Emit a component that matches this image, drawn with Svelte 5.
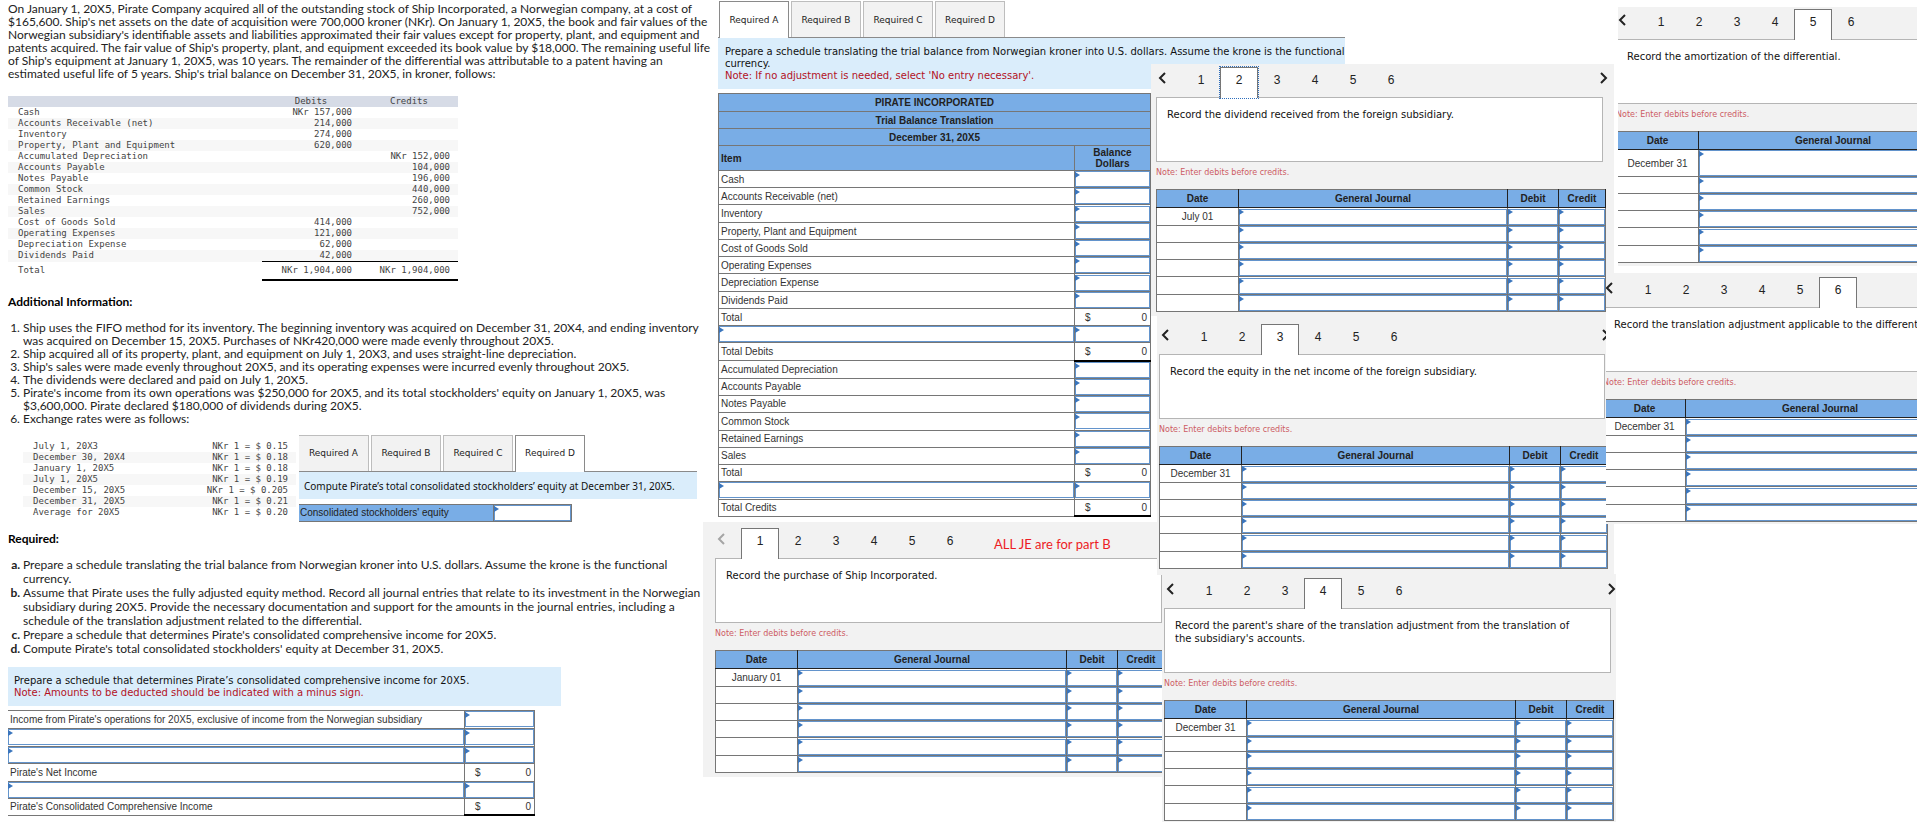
<script>
  const trialBalance = [
    { item: 'Cash', debit: 'NKr 157,000', credit: '' },
    { item: 'Accounts Receivable (net)', debit: '214,000', credit: '' },
    { item: 'Inventory', debit: '274,000', credit: '' },
    { item: 'Property, Plant and Equipment', debit: '620,000', credit: '' },
    { item: 'Accumulated Depreciation', debit: '', credit: 'NKr 152,000' },
    { item: 'Accounts Payable', debit: '', credit: '104,000' },
    { item: 'Notes Payable', debit: '', credit: '196,000' },
    { item: 'Common Stock', debit: '', credit: '440,000' },
    { item: 'Retained Earnings', debit: '', credit: '260,000' },
    { item: 'Sales', debit: '', credit: '752,000' },
    { item: 'Cost of Goods Sold', debit: '414,000', credit: '' },
    { item: 'Operating Expenses', debit: '121,000', credit: '' },
    { item: 'Depreciation Expense', debit: '62,000', credit: '' },
    { item: 'Dividends Paid', debit: '42,000', credit: '' }
  ];

  const rates = [
    ['July 1, 20X3', 'NKr 1 = $ 0.15'],
    ['December 30, 20X4', 'NKr 1 = $ 0.18'],
    ['January 1, 20X5', 'NKr 1 = $ 0.18'],
    ['July 1, 20X5', 'NKr 1 = $ 0.19'],
    ['December 15, 20X5', 'NKr 1 = $ 0.205'],
    ['December 31, 20X5', 'NKr 1 = $ 0.21'],
    ['Average for 20X5', 'NKr 1 = $ 0.20']
  ];

  const translation = [
    { label: 'Cash' },
    { label: 'Accounts Receivable (net)' },
    { label: 'Inventory' },
    { label: 'Property, Plant and Equipment' },
    { label: 'Cost of Goods Sold' },
    { label: 'Operating Expenses' },
    { label: 'Depreciation Expense' },
    { label: 'Dividends Paid' },
    { label: 'Total', total: true },
    { label: '' },
    { label: 'Total Debits', total: true, final: true },
    { label: 'Accumulated Depreciation' },
    { label: 'Accounts Payable' },
    { label: 'Notes Payable' },
    { label: 'Common Stock' },
    { label: 'Retained Earnings' },
    { label: 'Sales' },
    { label: 'Total', total: true },
    { label: '' },
    { label: 'Total Credits', total: true, final: true }
  ];

  const income = [
    { label: "Income from Pirate's operations for 20X5, exclusive of income from the Norwegian subsidiary" },
    { label: '' },
    { label: '' },
    { label: "Pirate's Net Income", total: true },
    { label: '' },
    { label: "Pirate's Consolidated Comprehensive Income", total: true, final: true }
  ];

  const entries = [
    { page: 1, date: 'January 01', text: 'Record the purchase of Ship Incorporated.', remark: 'ALL JE are for part B' },
    { page: 2, date: 'July 01', text: 'Record the dividend received from the foreign subsidiary.' },
    { page: 3, date: 'December 31', text: 'Record the equity in the net income of the foreign subsidiary.' },
    { page: 4, date: 'December 31', text: "Record the parent's share of the translation adjustment from the translation of the subsidiary's accounts." },
    { page: 5, date: 'December 31', text: 'Record the amortization of the differential.' },
    { page: 6, date: 'December 31', text: 'Record the translation adjustment applicable to the differential.' }
  ];

  const pages = [1, 2, 3, 4, 5, 6];
  const parts = ['A', 'B', 'C', 'D'];
</script>

{#snippet partTabs(active)}
  <div class="part-tabs">
    {#each parts as part}
      <button type="button" class:active={part === active}>Required {part}</button>
    {/each}
  </div>
{/snippet}

{#snippet field(label)}
  <td class="field"><input type="text" aria-label={label} /></td>
{/snippet}

{#snippet amountRows(rows)}
  {#each rows as row}
    <tr>
      {#if row.label}
        <td class="label">{row.label}</td>
      {:else}
        {@render field('Item')}
      {/if}
      {#if row.total}
        <td class="total" class:final={row.final}>
          <div class="money"><span>$</span><span>0</span></div>
        </td>
      {:else}
        {@render field(row.label || 'Amount')}
      {/if}
    </tr>
  {/each}
{/snippet}

{#snippet journal(entry)}
  <section class="journal journal-{entry.page}">
    <div class="sheet">
      <div class="pager">
        <button type="button" class="arrow" aria-label="Previous" disabled={entry.page === 1}>
          <svg viewBox="0 0 8 12"><path d="M7 1 L2 6 L7 11" /></svg>
        </button>
        {#each pages as page}
          <button type="button" class="page" class:active={page === entry.page}>{page}</button>
        {/each}
        {#if entry.remark}
          <span class="remark">{entry.remark}</span>
        {/if}
        <button type="button" class="arrow next" aria-label="Next">
          <svg viewBox="0 0 8 12"><path d="M1 1 L6 6 L1 11" /></svg>
        </button>
      </div>
      <div class="prompt">{entry.text}</div>
      <p class="hint">Note: Enter debits before credits.</p>
      <table class="grid">
        <colgroup><col class="c-date" /><col /><col class="c-debit" /><col class="c-credit" /></colgroup>
        <thead>
          <tr><th>Date</th><th>General Journal</th><th>Debit</th><th>Credit</th></tr>
        </thead>
        <tbody>
          {#each pages as line}
            <tr>
              <td class="date">{line === 1 ? entry.date : ''}</td>
              {@render field('General Journal')}
              {@render field('Debit')}
              {@render field('Credit')}
            </tr>
          {/each}
        </tbody>
      </table>
    </div>
  </section>
{/snippet}

<main>
  <div class="problem">
    <p>
      On January 1, 20X5, Pirate Company acquired all of the outstanding stock of Ship Incorporated, a Norwegian company, at a cost of<br />
      $165,600. Ship's net assets on the date of acquisition were 700,000 kroner (NKr). On January 1, 20X5, the book and fair values of the<br />
      Norwegian subsidiary's identifiable assets and liabilities approximated their fair values except for property, plant, and equipment and<br />
      patents acquired. The fair value of Ship's property, plant, and equipment exceeded its book value by $18,000. The remaining useful life<br />
      of Ship's equipment at January 1, 20X5, was 10 years. The remainder of the differential was attributable to a patent having an<br />
      estimated useful life of 5 years. Ship's trial balance on December 31, 20X5, in kroner, follows:
    </p>

    <table class="listing balance">
      <colgroup><col /><col class="c-amount" /><col class="c-amount" /></colgroup>
      <thead>
        <tr><th></th><th>Debits</th><th>Credits</th></tr>
      </thead>
      <tbody>
        {#each trialBalance as row}
          <tr><td>{row.item}</td><td>{row.debit}</td><td>{row.credit}</td></tr>
        {/each}
      </tbody>
      <tfoot>
        <tr><td>Total</td><td>NKr 1,904,000</td><td>NKr 1,904,000</td></tr>
      </tfoot>
    </table>

    <h2>Additional Information:</h2>
    <ol class="facts">
      <li>Ship uses the FIFO method for its inventory. The beginning inventory was acquired on December 31, 20X4, and ending inventory<br />was acquired on December 15, 20X5. Purchases of NKr420,000 were made evenly throughout 20X5.</li>
      <li>Ship acquired all of its property, plant, and equipment on July 1, 20X3, and uses straight-line depreciation.</li>
      <li>Ship's sales were made evenly throughout 20X5, and its operating expenses were incurred evenly throughout 20X5.</li>
      <li>The dividends were declared and paid on July 1, 20X5.</li>
      <li>Pirate's income from its own operations was $250,000 for 20X5, and its total stockholders' equity on January 1, 20X5, was<br />$3,600,000. Pirate declared $180,000 of dividends during 20X5.</li>
      <li>Exchange rates were as follows:</li>
    </ol>

    <div class="rates-row">
      <table class="listing rates">
        <tbody>
          {#each rates as [date, rate]}
            <tr><td>{date}</td><td>{rate}</td></tr>
          {/each}
        </tbody>
      </table>
      <section class="part-d">
        {@render partTabs('D')}
        <div class="instruction">Compute Pirate’s total consolidated stockholders’ equity at December 31, 20X5.</div>
        <table class="grid equity">
          <tbody>
            <tr>
              <th scope="row">Consolidated stockholders' equity</th>
              {@render field("Consolidated stockholders' equity")}
            </tr>
          </tbody>
        </table>
      </section>
    </div>

    <h2 class="required">Required:</h2>
    <ol class="tasks" type="a">
      <li>Prepare a schedule translating the trial balance from Norwegian kroner into U.S. dollars. Assume the krone is the functional<br />currency.</li>
      <li>Assume that Pirate uses the fully adjusted equity method. Record all journal entries that relate to its investment in the Norwegian<br />subsidiary during 20X5. Provide the necessary documentation and support for the amounts in the journal entries, including a<br />schedule of the translation adjustment related to the differential.</li>
      <li>Prepare a schedule that determines Pirate's consolidated comprehensive income for 20X5.</li>
      <li>Compute Pirate's total consolidated stockholders' equity at December 31, 20X5.</li>
    </ol>

    <div class="instruction part-c">
      Prepare a schedule that determines Pirate’s consolidated comprehensive income for 20X5.<br />
      <span class="note">Note: Amounts to be deducted should be indicated with a minus sign.</span>
    </div>
    <table class="grid income">
      <colgroup><col /><col class="c-income" /></colgroup>
      <tbody>
        {@render amountRows(income)}
      </tbody>
    </table>
  </div>

  <div class="middle">
    <section class="part-a">
      {@render partTabs('A')}
      <div class="instruction">
        Prepare a schedule translating the trial balance from Norwegian kroner into U.S. dollars. Assume the krone is the functional<br />currency.<br />
        <span class="note">Note: If no adjustment is needed, select 'No entry necessary'.</span>
      </div>
    </section>
    <table class="grid translation">
      <colgroup><col /><col class="c-balance" /></colgroup>
      <thead>
        <tr><th colspan="2">PIRATE INCORPORATED</th></tr>
        <tr><th colspan="2">Trial Balance Translation</th></tr>
        <tr><th colspan="2">December 31, 20X5</th></tr>
        <tr class="heads"><th>Item</th><th>Balance<br />Dollars</th></tr>
      </thead>
      <tbody>
        {@render amountRows(translation)}
      </tbody>
    </table>
    {@render journal(entries[0])}
  </div>

  <div class="journals">
    {@render journal(entries[1])}
    {@render journal(entries[2])}
    {@render journal(entries[3])}
  </div>

  <div class="journals last">
    {@render journal(entries[4])}
    {@render journal(entries[5])}
  </div>
</main>

<style>
  :global(body) {
    background: #fff;
    overflow: hidden;
  }

  *, *::before, *::after {
    box-sizing: border-box;
  }

  main {
    display: grid;
    grid-template-columns: minmax(0, 703fr) minmax(0, 448fr) minmax(0, 455fr) minmax(0, 311fr);
    align-items: start;
    font-family: 'Liberation Sans', Arial, sans-serif;
    font-size: 10px;
    color: #222;
    overflow: hidden;
  }

  button, input {
    font: inherit;
    color: inherit;
    margin: 0;
    padding: 0;
    border: 0;
    background: none;
  }

  button {
    cursor: pointer;
  }

  /* Problem text */
  .problem {
    padding: 2px 0 0 8px;
    font-family: Lato, sans-serif;
    font-size: 12px;
    line-height: 13px;
    white-space: nowrap;
  }

  p, h2, ol {
    margin: 0;
  }

  h2 {
    margin-top: 14px;
    font-size: 12px;
    line-height: 14px;
    color: #000;
  }

  .required {
    margin-top: 10px;
  }

  ol {
    padding-left: 15px;
  }

  .facts {
    margin-top: 12px;
  }

  .tasks {
    margin-top: 12px;
    line-height: 14px;
  }

  .tasks li::marker {
    font-weight: bold;
  }

  .listing {
    border-collapse: collapse;
    table-layout: fixed;
    font-family: 'DejaVu Sans Mono', monospace;
    font-size: 9px;
    line-height: 11px;
    color: #444;
  }

  .listing td, .listing th {
    height: 11px;
    padding: 0 8px 0 10px;
    font-weight: normal;
  }

  .listing td + td {
    padding-left: 0;
    text-align: right;
  }

  .listing tbody tr:nth-child(even) {
    background: #f7f7f7;
  }

  .balance {
    width: 100%;
    max-width: 450px;
    margin-top: 16px;
  }

  .balance th {
    padding: 0;
    background: #d6dbe6;
  }

  .c-amount {
    width: 98px;
  }

  .balance tfoot td {
    height: 18px;
  }

  .balance tfoot td + td {
    border-top: 1px solid #000;
    border-bottom: 2px solid #000;
  }

  .rates-row {
    display: flex;
    align-items: flex-start;
    margin: 10px 6px 0 15px;
  }

  .rates {
    flex: none;
    width: 273px;
    margin: 6px 3px 0 0;
  }

  .part-d {
    flex: 1;
    min-width: 0;
  }

  /* Required A - D tabs */
  .part-tabs {
    display: flex;
    gap: 2px;
    border-bottom: 1px solid #8a8a8a;
    font-family: 'DejaVu Sans', Verdana, sans-serif;
    font-size: 9px;
  }

  .part-tabs button {
    width: 70px;
    height: 36px;
    background: #f2f2f2;
    border: 1px solid #bdbdbd;
    border-bottom: 0;
  }

  .part-tabs button.active {
    height: 37px;
    margin-bottom: -1px;
    background: #fff;
    border-color: #8a8a8a;
  }

  .part-d button:first-child {
    border-left: 0;
  }

  .instruction {
    padding: 8px 7px 7px;
    background: #daedfb;
    color: #111;
    font-family: 'DejaVu Sans', Verdana, sans-serif;
    font-size: 10px;
    line-height: 12px;
    white-space: nowrap;
  }

  .part-d .instruction {
    padding-left: 5px;
    padding-right: 0;
    font-family: 'Noto Sans', Verdana, sans-serif;
  }

  .part-c {
    max-width: 553px;
    margin-top: 11px;
    padding: 8px 6px 7px;
  }

  .note {
    color: #b3121f;
  }

  /* Worksheets */
  .grid {
    width: 100%;
    border-collapse: collapse;
    table-layout: fixed;
    font-family: 'Liberation Sans', Arial, sans-serif;
    font-size: 10px;
    line-height: 11px;
    background: #fff;
    color: #333;
  }

  .grid td, .grid th {
    height: 17px;
    padding: 0 2px;
    border: 1px solid #767676;
  }

  .grid th {
    background: #79ade6;
    color: #222;
  }

  .grid .field {
    position: relative;
    padding: 0;
  }

  .field::before {
    content: '';
    position: absolute;
    top: 1px;
    left: 0;
    border: solid transparent;
    border-width: 3px 0 3px 5px;
    border-left-color: #3a75bd;
    pointer-events: none;
  }

  .field input {
    display: block;
    width: 100%;
    height: 16px;
    border: 1px solid #6394cc;
    border-radius: 0;
    outline: none;
  }

  .field input:focus {
    background: #eef5fd;
  }

  .money {
    display: flex;
    justify-content: space-between;
    padding: 0 1px 0 8px;
  }

  .grid .total {
    border-top-color: #000;
  }

  .grid .final {
    border-bottom: 2px solid #000;
  }

  .equity {
    width: 273px;
    margin-top: 5px;
  }

  .grid.equity th {
    width: 194px;
    padding: 0 1px;
    border-left: 0;
    text-align: left;
    font-weight: normal;
  }

  .income {
    max-width: 527px;
    margin-top: 4px;
  }

  .grid.income td:first-child {
    border-left: 0;
  }

  .income tr:nth-child(-n + 2) td, .income tr:nth-child(4) td {
    height: 18px;
  }

  .c-income {
    width: 70px;
  }

  .middle {
    padding-top: 1px;
  }

  .part-a {
    margin: 0 -194px 4px 15px;
  }

  .part-a .part-tabs {
    padding-left: 1px;
  }

  .translation {
    width: auto;
    min-width: calc(100% - 15px);
    margin-left: 15px;
  }

  .translation thead .heads th {
    height: 25px;
  }

  .translation thead tr:first-child th, .translation tbody tr:nth-child(4n + 3) td {
    height: 18px;
  }

  .heads th:first-child {
    text-align: left;
  }

  .c-balance {
    width: 76px;
  }

  /* Journal entry panels */
  .journal {
    position: relative;
    overflow: hidden;
    background: #f2f2f2;
  }

  .pager {
    display: flex;
    align-items: flex-start;
    height: 31px;
    margin-bottom: -1px;
    font-size: 12px;
    color: #222;
  }

  .arrow {
    width: 26px;
    height: 28px;
    padding-left: 2px;
    text-align: left;
  }

  .arrow svg {
    display: block;
    width: 8px;
    height: 12px;
    margin-bottom: 6px;
    fill: none;
    stroke: #222;
    stroke-width: 2;
  }

  .arrow:disabled svg {
    stroke: #a5a5a5;
  }

  .next {
    width: 8px;
    margin: 0 -2px 0 auto;
    padding: 0;
  }

  .page {
    width: 38px;
    height: 31px;
    padding-bottom: 7px;
    border: 1px solid transparent;
    border-bottom: 0;
  }

  .page.active {
    position: relative;
    background: #fff;
    border-color: #767676;
  }

  .journal-2 .page.active {
    outline: 1px dotted #2f6fbd;
  }

  .remark {
    align-self: center;
    margin-left: 25px;
    font-family: Lato, sans-serif;
    font-size: 13px;
    color: #ed1c24;
  }

  .prompt {
    height: 65px;
    margin-right: 3px;
    padding: 10px 30px 0 10px;
    background: #fff;
    border: 1px solid #b5b5b5;
    font-family: 'DejaVu Sans', Verdana, sans-serif;
    font-size: 10px;
    line-height: 13px;
    color: #111;
  }

  .journal-6 .prompt {
    padding-right: 0;
  }

  .hint {
    height: 27px;
    padding-top: 6px;
    font-family: 'DejaVu Sans', Verdana, sans-serif;
    font-size: 8px;
    line-height: 10px;
    color: #cd5c63;
  }

  .journal thead th {
    height: 18px;
    border-color: #222;
    border-top-color: #767676;
  }

  .journal thead th:first-child {
    border-left-color: #767676;
  }

  .journal tr:nth-child(4n + 1) td {
    height: 18px;
  }

  .date {
    text-align: center;
  }

  .c-date {
    width: 82px;
  }

  .c-debit {
    width: 51px;
  }

  .c-credit {
    width: 47px;
  }

  .journal-1 {
    margin: 5px -11px 0 0;
    padding: 6px 0 4px;
  }

  .journal-1 .sheet {
    margin: 0 -3px 0 12px;
  }

  .journals {
    padding-top: 64px;
  }

  .journal-2 {
    margin-right: -8px;
    padding: 3px 8px 4px 5px;
  }

  .journal-3 {
    margin: 0 -8px 0 6px;
    padding: 8px 6px 6px 2px;
  }

  .journal-4 {
    margin: -1px -10px 0 11px;
    padding: 4px 2px 1px 2px;
  }

  .journal-4 tbody tr:nth-child(2) td {
    height: 15px;
  }

  .journal-4 tbody tr:nth-child(2) input {
    height: 14px;
  }

  .last {
    padding-top: 7px;
  }

  .journal-5 {
    margin-left: 12px;
    padding: 2px 0 3px;
  }

  .journal-5 .sheet {
    margin: 0 -149px 0 -2px;
  }

  .journal-5 tbody tr:first-child td {
    height: 27px;
  }

  .journal-5 tbody tr:first-child input {
    height: 26px;
  }

  .journal-6 {
    margin-top: 7px;
    padding: 4px 0 2px;
  }

  .journal-6 .sheet {
    margin: 0 -136px 0 -3px;
  }
</style>
